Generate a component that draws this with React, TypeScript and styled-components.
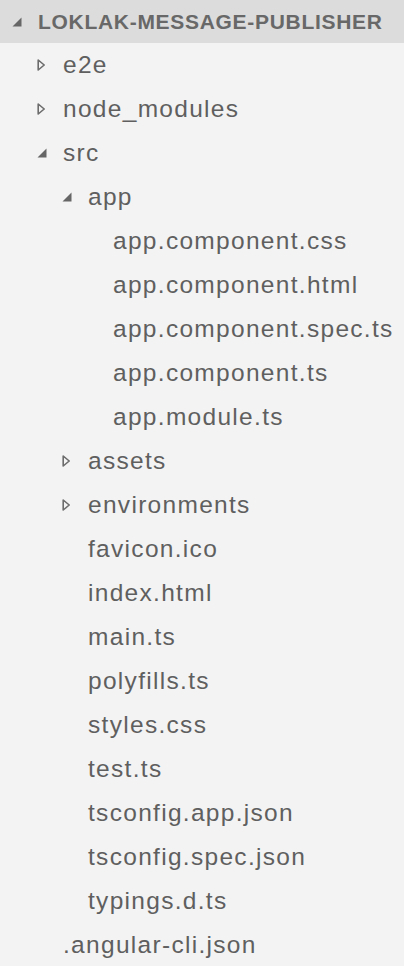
import React from "react";
import styled, { createGlobalStyle } from "styled-components";

const GlobalStyle = createGlobalStyle`
  html, body {
    margin: 0;
    padding: 0;
    background: #f3f3f3;
  }
  body {
    font-family: "Liberation Sans", Arial, sans-serif;
  }
`;

type Node = {
  name: string;
  depth: number;
  folder?: "open" | "closed";
};

const tree: Node[] = [
  { name: "e2e", depth: 0, folder: "closed" },
  { name: "node_modules", depth: 0, folder: "closed" },
  { name: "src", depth: 0, folder: "open" },
  { name: "app", depth: 1, folder: "open" },
  { name: "app.component.css", depth: 2 },
  { name: "app.component.html", depth: 2 },
  { name: "app.component.spec.ts", depth: 2 },
  { name: "app.component.ts", depth: 2 },
  { name: "app.module.ts", depth: 2 },
  { name: "assets", depth: 1, folder: "closed" },
  { name: "environments", depth: 1, folder: "closed" },
  { name: "favicon.ico", depth: 1 },
  { name: "index.html", depth: 1 },
  { name: "main.ts", depth: 1 },
  { name: "polyfills.ts", depth: 1 },
  { name: "styles.css", depth: 1 },
  { name: "test.ts", depth: 1 },
  { name: "tsconfig.app.json", depth: 1 },
  { name: "tsconfig.spec.json", depth: 1 },
  { name: "typings.d.ts", depth: 1 },
  { name: ".angular-cli.json", depth: 0 },
];

function Twistie({ open }: { open: boolean }) {
  if (open) {
    return (
      <svg width="10" height="10" viewBox="0 0 10 10">
        <path d="M9.5 0.5 L9.5 9.5 L0.5 9.5 Z" fill="#666" />
      </svg>
    );
  }
  return (
    <svg width="9" height="12" viewBox="0 0 9 12">
      <path d="M1.2 1 L7.2 6 L1.2 11 Z" fill="none" stroke="#6c6c6c" strokeWidth="1.6" strokeLinejoin="round" />
    </svg>
  );
}

function App() {
  return (
    <>
      <GlobalStyle />
      <Explorer>
        <Header>
          <TwistieBox>
            <Twistie open />
          </TwistieBox>
          <HeaderTitle>loklak-message-publisher</HeaderTitle>
        </Header>
        <List>
          {tree.map((n) => (
            <Row key={n.name} $depth={n.depth}>
              <TwistieBox>{n.folder && <Twistie open={n.folder === "open"} />}</TwistieBox>
              <Label>{n.name}</Label>
            </Row>
          ))}
        </List>
      </Explorer>
    </>
  );
}

const Explorer = styled.div`
  width: 404px;
  min-height: 966px;
  background: #f3f3f3;
  display: flex;
  flex-direction: column;
`;

const Header = styled.div`
  height: 43px;
  background: #dcdcdc;
  display: flex;
  align-items: center;
  padding-left: 12px;
  box-sizing: border-box;
`;

const HeaderTitle = styled.span`
  font-weight: 700;
  font-size: 21px;
  letter-spacing: 0.7px;
  text-transform: uppercase;
  color: #686868;
  white-space: nowrap;
`;

const List = styled.div`
  display: flex;
  flex-direction: column;
`;

const Row = styled.div<{ $depth: number }>`
  height: 44px;
  display: flex;
  align-items: center;
  padding-left: ${(p) => 37 + p.$depth * 25}px;
  box-sizing: border-box;
`;

const TwistieBox = styled.span`
  width: 26px;
  flex: none;
  display: flex;
  align-items: center;
  svg {
    display: block;
  }
`;

const Label = styled.span`
  font-size: 24.5px;
  letter-spacing: 1.3px;
  color: #5f5f5f;
  white-space: nowrap;
`;

export default App;
